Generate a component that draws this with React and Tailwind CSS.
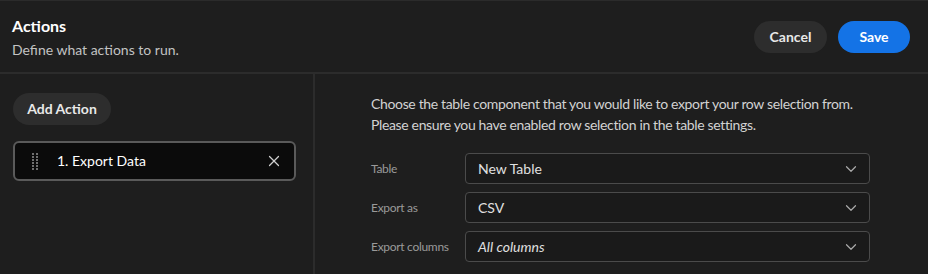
import { ChevronDown, X } from "lucide-react";

const rows = [
  { label: "Table", value: "New Table" },
  { label: "Export as", value: "CSV" },
  { label: "Export columns", value: "All columns", italic: true },
];

function DragHandle() {
  const dots = [];
  for (let r = 0; r < 6; r++) {
    for (let c = 0; c < 2; c++) {
      dots.push(<rect key={r + "-" + c} x={c * 4} y={r * 3} width="2" height="2" fill="#6f6f6f" />);
    }
  }
  return (
    <svg width="6" height="17" viewBox="0 0 6 17">
      {dots}
    </svg>
  );
}

export default function App() {
  return (
    <div className="h-screen flex flex-col bg-[#1e1e1e] border-t border-[#2b2b2b] overflow-hidden text-[#e6e6e6] font-['Lato',sans-serif]">
      <div className="h-[73px] shrink-0 flex items-center justify-between pl-3 pr-[18px] border-b-2 border-[#2c2c2c]">
        <div>
          <h1 className="text-base leading-6 font-bold text-white">Actions</h1>
          <p className="text-sm leading-5 text-[#c3c3c3] mt-[2px]">Define what actions to run.</p>
        </div>
        <div className="flex items-center gap-[11px]">
          <button className="h-8 w-[73px] rounded-full bg-[#2d2d2d] text-sm font-bold text-[#e8e8e8]">
            Cancel
          </button>
          <button className="h-8 w-[72px] rounded-full bg-[#1473e6] text-sm font-bold text-white">
            Save
          </button>
        </div>
      </div>

      <div className="flex flex-1 min-h-0">
        <div className="w-[315px] shrink-0 border-r-2 border-[#2c2c2c] pl-[13px] pr-[17px] pt-[19px]">
          <button className="h-8 w-[98px] rounded-full bg-[#2d2d2d] text-sm font-bold text-[#e8e8e8]">
            Add Action
          </button>
          <div className="mt-4 h-10 flex items-center rounded-md border-2 border-[#5a5a5a] bg-[#0b0b0b] pl-[17px] pr-[11px]">
            <DragHandle />
            <span className="ml-[19px] flex-1 text-sm text-white">1. Export Data</span>
            <X size={18} strokeWidth={1.6} className="text-[#cfcfcf]" />
          </div>
        </div>

        <div className="flex-1 pl-[56px] pt-[19px]">
          <div className="w-[499px]">
            <p className="text-sm leading-[21px] tracking-[-0.35px] whitespace-nowrap text-[#d2d2d2]">
              Choose the table component that you would like to export your row selection from.
              <br />
              Please ensure you have enabled row selection in the table settings.
            </p>
            <div className="mt-[18px] flex flex-col gap-2">
              {rows.map((row) => (
                <div key={row.label} className="flex items-center">
                  <span className="w-[94px] shrink-0 text-xs tracking-[-0.3px] text-[#9a9a9a]">{row.label}</span>
                  <div className="flex-1 h-[31px] flex items-center justify-between rounded border border-[#4b4b4b] bg-[#1a1a1a] pl-3 pr-[9px]">
                    <span className={"text-sm text-[#e0e0e0]" + (row.italic ? " italic" : "")}>{row.value}</span>
                    <ChevronDown size={18} strokeWidth={1.6} className="text-[#aaaaaa]" />
                  </div>
                </div>
              ))}
            </div>
          </div>
        </div>
      </div>
    </div>
  );
}
